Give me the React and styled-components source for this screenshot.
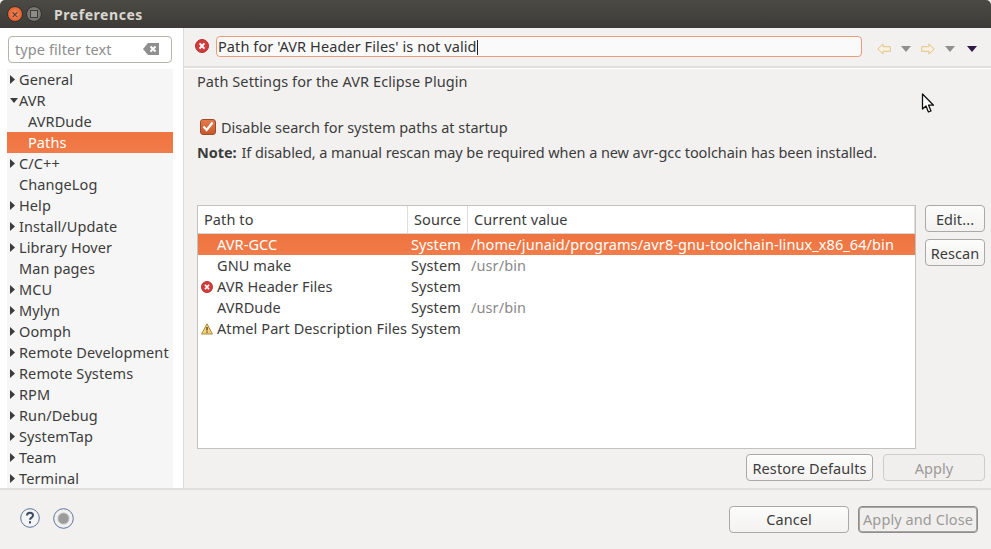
import React from "react";
import styled, { createGlobalStyle } from "styled-components";

const Global = createGlobalStyle`
  html, body { margin: 0; padding: 0; background: #f2f1f0; }
  * { box-sizing: border-box; }
`;

const Window = styled.div`
  width: 991px; height: 549px; position: relative; overflow: hidden;
  display: flex; flex-direction: column; background: #f2f1f0;
  font-family: "Noto Sans", "Open Sans", sans-serif; font-size: 14.5px; color: #3c3c3c;
  letter-spacing: 0.09px;
`;
const TitleBar = styled.div`
  height: 28px; flex: none; display: flex; align-items: center; padding-left: 7px;
  background: linear-gradient(#4b4a44, #3c3b37); border-radius: 5px 5px 0 0;
`;
const TitleButton = styled.div`
  width: 16px; height: 16px; border-radius: 50%; margin-right: 3px; display: flex;
  align-items: center; justify-content: center; font-size: 9px; line-height: 1;
  border: 1px solid #33322e; letter-spacing: 0;
  background: ${p => p.$close ? "radial-gradient(#f08a5e, #e2501c)" : "radial-gradient(#8f8e88, #65645e)"};
  color: #3c3b37;
`;
const TitleSquare = styled.span`
  width: 8px; height: 8px; border: 1px solid #3c3b37; background: #8d8c86; display: block;
`;
const Title = styled.div`
  margin-left: 9px; font-weight: 700; font-size: 14px; color: #d9d6cf; letter-spacing: .55px;
`;
const Main = styled.div`
  flex: 1; min-height: 0; display: flex;
`;
const Side = styled.div`
  width: 184px; flex: none; background: #fff; border-right: 1px solid #dcdad7;
  padding: 8px 10px 0 7px; display: flex; flex-direction: column;
`;
const Filter = styled.div`
  height: 27px; flex: none; margin: 0 1px 6px 1px; border: 1px solid #b5b3ae; border-radius: 4px;
  background: #fff; display: flex; align-items: center; justify-content: space-between;
  padding: 0 12px 2px 6px; color: #8d8d8d;
`;
const Tree = styled.div`
  flex: 1; min-height: 0; overflow: hidden; background: #f6f6f6;
`;
const TreeRow = styled.div`
  height: 21px; line-height: 21px; display: flex; align-items: center; white-space: nowrap;
  padding-left: ${p => p.$child ? 21 : 3}px;
  background: ${p => p.$sel ? "linear-gradient(#ee7440, #f17c4a)" : "transparent"};
  color: ${p => p.$sel ? "#fff" : "#3c3c3c"};
`;
const Twist = styled.span`
  width: 9px; flex: none; display: flex;
`;
const Content = styled.div`
  flex: 1; min-width: 0; display: flex; flex-direction: column;
`;
const MessageBar = styled.div`
  height: 40px; flex: none; display: flex; align-items: center; padding: 0 12px 2px 11px;
  border-bottom: 2px solid #e1dfdc;
  box-shadow: 0 1px 0 #fff;
`;
const MessageInput = styled.div`
  width: 646px; height: 21px; margin-left: 7px; margin-right: 15px; flex: none;
  border: 1px solid #ec9b7c; border-radius: 4px; background: #fbfafa;
  padding-left: 1px; line-height: 18px; color: #333; white-space: nowrap;
`;
const Caret = styled.span`
  display: inline-block; width: 1px; height: 15px; background: #222; vertical-align: -3px;
`;
const NavIcons = styled.div`
  display: flex; align-items: center; gap: 10px; margin-top: 5px;
`;
const MenuDrop = styled.span`
  display: flex; margin-left: 2px;
`;
const Body = styled.div`
  flex: 1; min-height: 0; padding: 3px 6px 0 13px; display: flex; flex-direction: column;
`;
const Description = styled.div`
  height: 21px; line-height: 21px;
`;
const CheckRow = styled.div`
  margin-top: 24px; height: 21px; display: flex; align-items: center; padding-left: 3px; gap: 5px;
  letter-spacing: 0;
`;
const CheckBox = styled.div`
  width: 16px; height: 16px; border-radius: 3px; background: linear-gradient(#e47a4c, #c9592c);
  border: 1px solid #9a4b2a; display: flex; align-items: center; justify-content: center;
`;
const Note = styled.div`
  margin-top: 5px; height: 21px; line-height: 21px; letter-spacing: -0.08px; white-space: nowrap;
`;
const NoteLabel = styled.b`
  margin-right: 5px; font-weight: 700;
`;
const TableArea = styled.div`
  margin-top: 42px; display: flex; gap: 9px; align-items: flex-start;
`;
const Table = styled.div`
  width: 719px; height: 244px; flex: none; border: 1px solid #c4c2bd; background: #fff;
`;
const Header = styled.div`
  height: 28px; display: flex; border-bottom: 1px solid #d8d6d2; background: #fff;
`;
const HeadCell = styled.div`
  width: ${p => p.$w}px; flex: none; padding-left: 6px; line-height: 27px;
  border-right: 1px solid #e0dedb;
`;
const Row = styled.div`
  height: 21px; display: flex; line-height: 21px; white-space: nowrap;
  background: ${p => p.$sel ? "linear-gradient(#ee7440, #f17c4a)" : "transparent"};
  color: ${p => p.$sel ? "#fff" : "#3c3c3c"};
`;
const CellName = styled.div`
  width: 210px; flex: none; display: flex; align-items: center; padding-left: 3px;
`;
const IconSlot = styled.span`
  width: 16px; height: 16px; flex: none; display: flex; align-items: center; justify-content: flex-start;
`;
const CellSource = styled.div`
  width: 60px; flex: none; padding-left: 3px;
`;
const CellValue = styled.div`
  flex: 1; padding-left: 3px; color: ${p => p.$sel ? "#fff" : "#8a8a8a"};
`;
const SideButtons = styled.div`
  display: flex; flex-direction: column; gap: 7px;
`;
const Btn = styled.div`
  height: 27px; width: ${p => p.$w}px; flex: none; display: flex; align-items: center; justify-content: center;
  border-radius: 4px; white-space: nowrap;
  border: 1px solid ${p => p.$disabled ? "#cfcdca" : "#aba9a5"};
  background: ${p => p.$disabled ? "#f0efee" : "linear-gradient(#fcfcfb, #f3f2f1)"};
  color: ${p => p.$disabled ? "#9b9a98" : "#3c3c3c"};
  ${p => p.$default ? "box-shadow: inset 0 0 0 1px #a8a6a2; border-color:#8f8d8a;" : ""}
`;
const BottomRow = styled.div`
  margin-top: 5px; display: flex; justify-content: flex-end; gap: 10px;
`;
const Footer = styled.div`
  height: 61px; flex: none; border-top: 2px solid #e1dfdc; display: flex; align-items: center;
  padding: 0 13px 0 20px; background: #f2f1f0;
`;
const HelpIcons = styled.div`
  display: flex; gap: 13px; align-items: center; flex: 1; margin-top: -3px;
`;
const FooterButtons = styled.div`
  display: flex; gap: 9px; margin-top: -1px;
`;
const Pointer = styled.svg`
  position: absolute; left: 921px; top: 93px;
`;

const ErrorIcon = ({ size = 14 }) => (
  <svg width={size} height={size} viewBox="0 0 14 14">
    <circle cx="7" cy="7" r="6.5" fill="#d23b3b" stroke="#b52f2f" />
    <path d="M4.6 4.4 9.4 9.6M9.4 4.4 4.6 9.6" stroke="#fff" strokeWidth="2" />
  </svg>
);
const WarnIcon = () => (
  <svg width="12" height="12" viewBox="0 0 12 12">
    <path d="M6 .8 11.4 11H.6Z" fill="#f3d27a" stroke="#a98a3a" strokeLinejoin="round" />
    <path d="M6 4v3.6M6 8.6v1.2" stroke="#4a3a10" strokeWidth="1.3" />
  </svg>
);
const TwistRight = () => (
  <svg width="5" height="9" viewBox="0 0 5 9"><path d="M0 0 5 4.5 0 9Z" fill="#3c3c3c" /></svg>
);
const TwistDown = () => (
  <svg width="8" height="5" viewBox="0 0 8 5"><path d="M0 0H8L4 5Z" fill="#3c3c3c" /></svg>
);
const Drop = ({ color = "#8f8f8f" }) => (
  <svg width="10" height="6" viewBox="0 0 10 6"><path d="M0 0H10L5 6Z" fill={color} /></svg>
);
const ArrowLeft = () => (
  <svg width="14" height="12" viewBox="0 0 15 13">
    <path d="M.7 6.5 6.5 1v3h7.8v5H6.5v3Z" fill="#f6f1e3" stroke="#e5c078" />
  </svg>
);
const ArrowRight = () => (
  <svg width="14" height="12" viewBox="0 0 15 13">
    <path d="M14.3 6.5 8.5 1v3H.7v5h7.8v3Z" fill="#f6f1e3" stroke="#e5c078" />
  </svg>
);

const items = [
  ["General", 1], ["AVR", 2], ["AVRDude", 0, 1], ["Paths", 0, 1, 1], ["C/C++", 1], ["ChangeLog", 3],
  ["Help", 1], ["Install/Update", 1], ["Library Hover", 1], ["Man pages", 3], ["MCU", 1], ["Mylyn", 1],
  ["Oomph", 1], ["Remote Development", 1], ["Remote Systems", 1], ["RPM", 1], ["Run/Debug", 1],
  ["SystemTap", 1], ["Team", 1], ["Terminal", 1],
];
const rows = [
  ["AVR-GCC", null, "/home/junaid/programs/avr8-gnu-toolchain-linux_x86_64/bin", true],
  ["GNU make", null, "/usr/bin"],
  ["AVR Header Files", "e", ""],
  ["AVRDude", null, "/usr/bin"],
  ["Atmel Part Description Files", "w", ""],
];

export default function App() {
  return (
    <Window>
      <Global />
      <TitleBar>
        <TitleButton $close>✕</TitleButton>
        <TitleButton><TitleSquare /></TitleButton>
        <Title>Preferences</Title>
      </TitleBar>
      <Main>
        <Side>
          <Filter>
            type filter text
            <svg width="16" height="12" viewBox="0 0 16 12">
              <path d="M5 0H16V12H5L0 6Z" fill="#8f8f8f" />
              <path d="M7.5 3.5 12.5 8.5M12.5 3.5 7.5 8.5" stroke="#fff" strokeWidth="2" />
            </svg>
          </Filter>
          <Tree>
            {items.map(([t, k, child, sel]) => (
              <TreeRow key={t} $child={child} $sel={sel}>
                {!child && <Twist>{k === 1 ? <TwistRight /> : k === 2 ? <TwistDown /> : null}</Twist>}
                {t}
              </TreeRow>
            ))}
          </Tree>
        </Side>
        <Content>
          <MessageBar>
            <ErrorIcon />
            <MessageInput>Path for 'AVR Header Files' is not valid<Caret /></MessageInput>
            <NavIcons>
              <ArrowLeft /><Drop /><ArrowRight /><Drop />
              <MenuDrop><Drop color="#2e1a47" /></MenuDrop>
            </NavIcons>
          </MessageBar>
          <Body>
            <Description>Path Settings for the AVR Eclipse Plugin</Description>
            <CheckRow>
              <CheckBox>
                <svg width="12" height="11" viewBox="0 0 12 11">
                  <path d="M1.5 5.5 4.7 9 10.5 1.5" fill="none" stroke="#fff" strokeWidth="2.2" />
                </svg>
              </CheckBox>
              Disable search for system paths at startup
            </CheckRow>
            <Note><NoteLabel>Note:</NoteLabel>If disabled, a manual rescan may be required when a new avr-gcc toolchain has been installed.</Note>
            <TableArea>
              <Table>
                <Header>
                  <HeadCell $w={210}>Path to</HeadCell>
                  <HeadCell $w={60}>Source</HeadCell>
                  <HeadCell $w={447}>Current value</HeadCell>
                </Header>
                {rows.map(([n, ic, v, sel]) => (
                  <Row key={n} $sel={sel}>
                    <CellName>
                      <IconSlot>{ic === "e" ? <ErrorIcon size={12} /> : ic === "w" ? <WarnIcon /> : null}</IconSlot>
                      {n}
                    </CellName>
                    <CellSource>System</CellSource>
                    <CellValue $sel={sel}>{v}</CellValue>
                  </Row>
                ))}
              </Table>
              <SideButtons>
                <Btn $w={60}>Edit...</Btn>
                <Btn $w={60}>Rescan</Btn>
              </SideButtons>
            </TableArea>
            <BottomRow>
              <Btn $w={127}>Restore Defaults</Btn>
              <Btn $w={102} $disabled>Apply</Btn>
            </BottomRow>
          </Body>
        </Content>
      </Main>
      <Footer>
        <HelpIcons>
          <svg width="20" height="20" viewBox="0 0 20 20">
            <circle cx="10" cy="10" r="9.3" fill="#f4f4f4" stroke="#5d7399" />
            <path d="M7 7.6C7 5.6 8.4 4.8 10 4.8s3 1 3 2.6c0 2.2-3 2.2-3 4.4" fill="none" stroke="#3d4a63" strokeWidth="2" />
            <rect x="9" y="13.2" width="2" height="2.2" fill="#3d4a63" />
          </svg>
          <svg width="21" height="21" viewBox="0 0 21 21">
            <circle cx="10.5" cy="10.5" r="9.8" fill="#f2f1f0" stroke="#5d7399" />
            <circle cx="10.5" cy="10.5" r="5.5" fill="#9b9b9b" stroke="#bdbdbd" />
          </svg>
        </HelpIcons>
        <FooterButtons>
          <Btn $w={120}>Cancel</Btn>
          <Btn $w={120} $disabled $default>Apply and Close</Btn>
        </FooterButtons>
      </Footer>
      <Pointer width="14" height="21" viewBox="0 0 14 21">
        <path d="M1.5 1V16L5 13l2.4 6 2.6-1-2.4-5.8H12.5Z" fill="#fff" stroke="#111" strokeWidth="1.3" strokeLinejoin="round" />
      </Pointer>
    </Window>
  );
}
